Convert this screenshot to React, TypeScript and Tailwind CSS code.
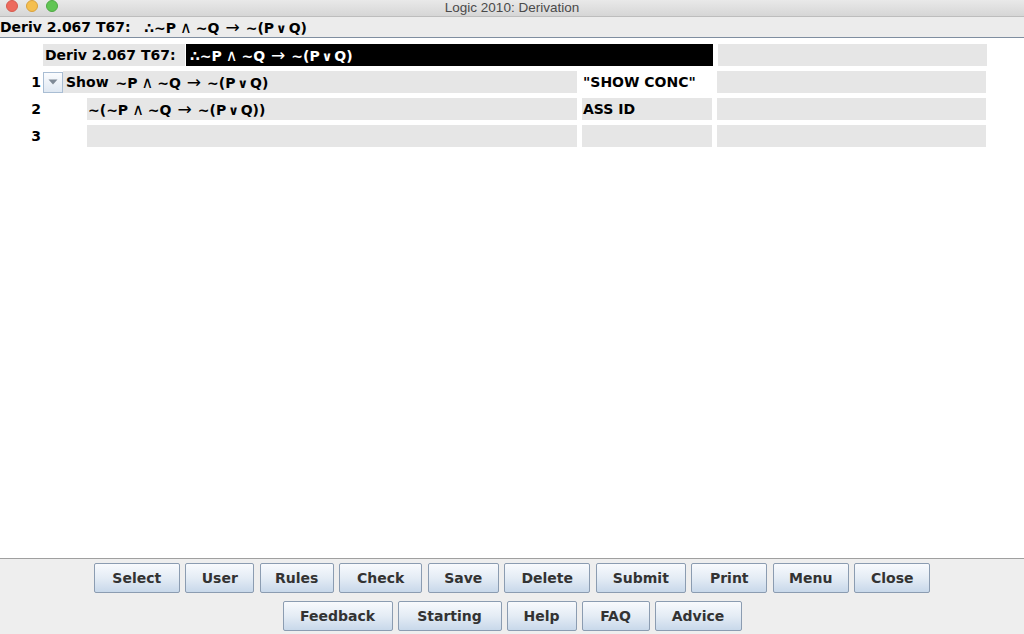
import React from "react";

const row1Buttons: [string, string][] = [
  ["Select", "w-[86px]"],
  ["User", "w-[69px]"],
  ["Rules", "w-[74px]"],
  ["Check", "w-[83px]"],
  ["Save", "w-[71px]"],
  ["Delete", "w-[86px]"],
  ["Submit", "w-[90px]"],
  ["Print", "w-[76px]"],
  ["Menu", "w-[76px]"],
  ["Close", "w-[76px]"],
];

const row2Buttons: [string, string][] = [
  ["Feedback", "w-[110px]"],
  ["Starting", "w-[104px]"],
  ["Help", "w-[70px]"],
  ["FAQ", "w-[68px]"],
  ["Advice", "w-[87px]"],
];

function Btn({ label, w }: { label: string; w: string }) {
  return (
    <button
      className={`${w} h-[30px] rounded-[2px] border border-[#8b9cb1] bg-gradient-to-b from-[#f8fafd] via-[#e4ecf5] to-[#c8d8ea] text-[14px] font-bold text-[#333333] leading-none`}
    >
      {label}
    </button>
  );
}

function Formula({ prefix = "", wrap = false }: { prefix?: string; wrap?: boolean }) {
  return (
    <span className="inline-flex items-baseline whitespace-pre leading-none">
      {prefix}
      {wrap ? "~(" : ""}~P
      <span className="mx-[4px] text-[16px] font-normal">∧</span>
      ~Q
      <span className="mx-[6px] text-[17px] font-normal">→</span>
      ~(P
      <span className="mx-[2px] text-[13px]">∨</span>
      Q){wrap ? ")" : ""}
    </span>
  );
}

export default function App() {
  return (
    <div className="w-full h-[634px] flex flex-col bg-white overflow-hidden font-['DejaVu_Sans',sans-serif] text-black">
      {/* title bar */}
      <div className="relative h-[17px] shrink-0 bg-gradient-to-b from-[#e9e9e9] to-[#d6d6d6] border-b border-[#bdbdbd] flex items-center justify-center">
        <div className="absolute left-[6px] top-0 flex gap-[8px]">
          <span className="w-[12px] h-[12px] rounded-full bg-[#ed6a5e] border border-[#d65b4f]" />
          <span className="w-[12px] h-[12px] rounded-full bg-[#f5bf4f] border border-[#d9a23d]" />
          <span className="w-[12px] h-[12px] rounded-full bg-[#61c554] border border-[#4fa944]" />
        </div>
        <span className="font-['Liberation_Sans',sans-serif] text-[13.5px] text-[#4a4a4a] leading-none">
          Logic 2010: Derivation
        </span>
      </div>

      {/* header */}
      <div className="h-[21px] shrink-0 bg-[#ececec] border-b border-[#7f8ea0] flex items-center text-[14px] font-bold">
        <span className="whitespace-pre leading-none">{"Deriv 2.067 T67:  "}</span>
        <span className="ml-[4px] inline-flex">
          <Formula prefix="∴" />
        </span>
      </div>

      {/* main */}
      <div className="flex-1 pt-[6px] flex flex-col gap-[5px] text-[14px] font-bold">
        {/* row 0 */}
        <div className="flex h-[22px] items-stretch">
          <div className="w-[43px] shrink-0" />
          <div className="w-[142px] bg-[#e6e6e6] flex items-center pl-[2px] whitespace-pre">Deriv 2.067 T67:</div>
          <div className="w-[527px] ml-[1px] bg-black text-white flex items-center pl-[4px]">
            <Formula prefix="∴" />
          </div>
          <div className="w-[269px] ml-[5px] bg-[#e6e6e6]" />
        </div>
        {/* row 1 */}
        <div className="flex h-[22px] items-stretch">
          <div className="w-[41px] shrink-0 flex items-center justify-end">1</div>
          <div className="w-[2px]" />
          <div className="w-[20px] h-[21px] self-center border border-[#a9bdd3] bg-gradient-to-b from-[#fbfcfe] to-[#dfe8f2] flex items-center justify-center">
            <svg width="10" height="6" viewBox="0 0 10 6">
              <path d="M0.5 0.5 L9.5 0.5 L5 5.5 Z" fill="#7f8a96" />
            </svg>
          </div>
          <div className="w-[514px] bg-[#e6e6e6] flex items-center pl-[3px] whitespace-pre">
            <span className="leading-none">{"Show "}</span>
            <span className="ml-[2px] inline-flex">
              <Formula />
            </span>
          </div>
          <div className="w-[130px] ml-[5px] bg-white flex items-center pl-[1px] whitespace-pre">"SHOW CONC"</div>
          <div className="w-[269px] ml-[5px] bg-[#e6e6e6]" />
        </div>
        {/* row 2 */}
        <div className="flex h-[22px] items-stretch">
          <div className="w-[41px] shrink-0 flex items-center justify-end">2</div>
          <div className="w-[46px]" />
          <div className="w-[490px] bg-[#e6e6e6] flex items-center pl-[1px]">
            <Formula wrap />
          </div>
          <div className="w-[130px] ml-[5px] bg-[#e6e6e6] flex items-center pl-[1px]">ASS ID</div>
          <div className="w-[269px] ml-[5px] bg-[#e6e6e6]" />
        </div>
        {/* row 3 */}
        <div className="flex h-[22px] items-stretch">
          <div className="w-[41px] shrink-0 flex items-center justify-end">3</div>
          <div className="w-[46px]" />
          <div className="w-[490px] bg-[#e6e6e6]" />
          <div className="w-[130px] ml-[5px] bg-[#e6e6e6]" />
          <div className="w-[269px] ml-[5px] bg-[#e6e6e6]" />
        </div>
      </div>

      {/* buttons */}
      <div className="h-[76px] shrink-0 bg-[#eeeeee] border-t border-[#9f9f9f] pt-[4px] flex flex-col items-center gap-[8px]">
        <div className="flex gap-[5.5px]">
          {row1Buttons.map(([l, w]) => (
            <Btn key={l} label={l} w={w} />
          ))}
        </div>
        <div className="flex gap-[5px]">
          {row2Buttons.map(([l, w]) => (
            <Btn key={l} label={l} w={w} />
          ))}
        </div>
      </div>
    </div>
  );
}
